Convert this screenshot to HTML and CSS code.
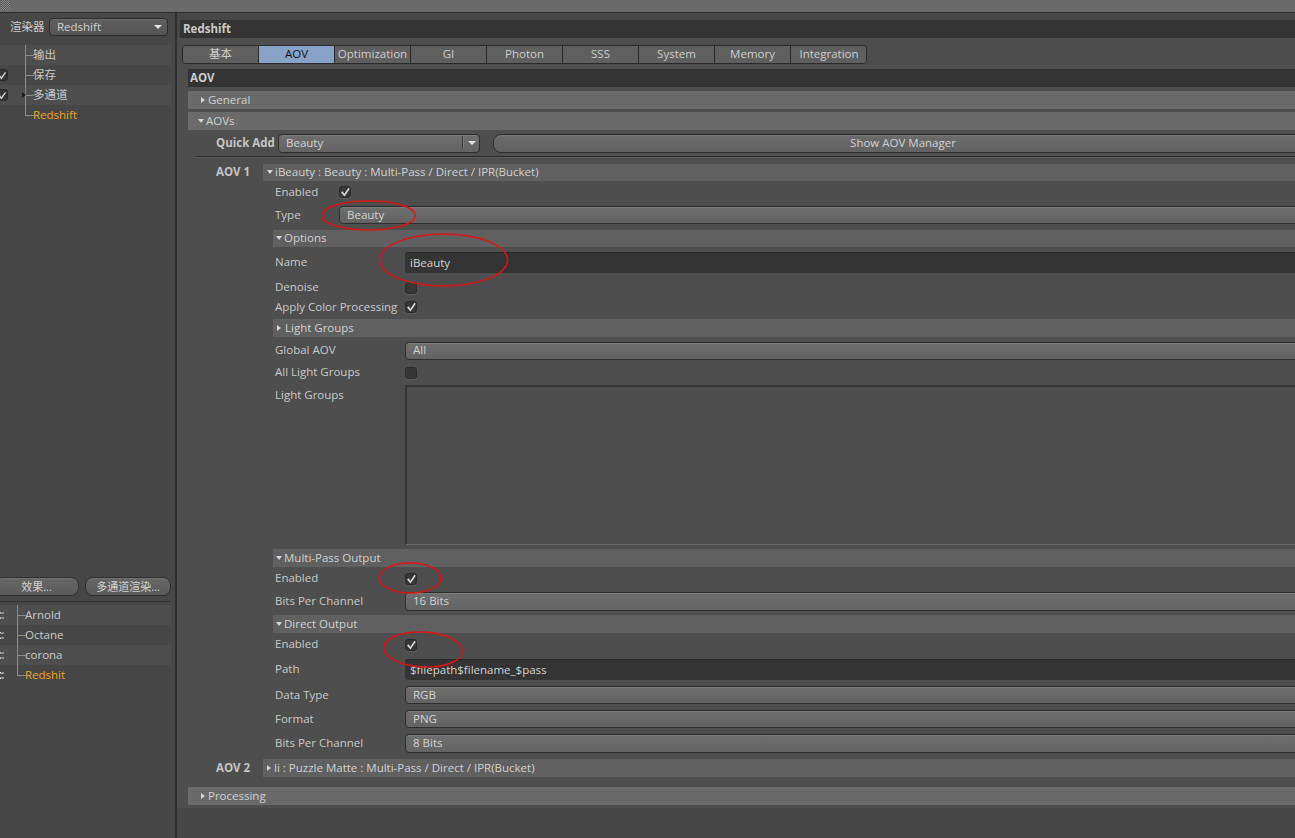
FILE: index.html
```html
<!DOCTYPE html>
<html lang="zh-CN">
<head>
<meta charset="utf-8">
<title>Redshift AOV</title>
<link rel="stylesheet" href="styles.css">
</head>
<body>
<div class="topbar"><div class="grip"></div></div>
<div class="main">
  <aside class="left">
    <div class="renderer">
      <span class="renderer-label">渲染器</span>
      <div class="combo combo-renderer"><span>Redshift</span><i class="arrow-w"></i></div>
    </div>
    <ul class="tree tree-top">
      <li class="alt">输出</li>
      <li><span class="lchk"><svg width="9" height="11" viewBox="0 0 9 11"><path d="M0.5 6 L2 5 L3.2 7.3 L7 2 L8 2.8 L3.5 9.5 Z" fill="#d6d6d6"/></svg></span>保存</li>
      <li class="alt"><span class="lchk"><svg width="9" height="11" viewBox="0 0 9 11"><path d="M0.5 6 L2 5 L3.2 7.3 L7 2 L8 2.8 L3.5 9.5 Z" fill="#d6d6d6"/></svg></span><span class="exp"></span>多通道</li>
      <li class="active last">Redshift</li>
    </ul>
    <div class="left-buttons">
      <button class="pill pill-a">效果...</button>
      <button class="pill pill-b">多通道渲染...</button>
    </div>
    <div class="left-sep"></div>
    <ul class="tree tree-bottom">
      <li class="alt"><span class="vico"><svg width="8" height="9" viewBox="0 0 8 9"><path d="M0 1.5 H3 V3 M0 7.5 H3 V6 M5 1 V3 M5 6 V8" fill="none" stroke="#d0d0d0" stroke-width="1"/></svg></span>Arnold</li>
      <li><span class="vico"><svg width="8" height="9" viewBox="0 0 8 9"><path d="M0 1.5 H3 V3 M0 7.5 H3 V6 M5 1 V3 M5 6 V8" fill="none" stroke="#d0d0d0" stroke-width="1"/></svg></span>Octane</li>
      <li class="alt"><span class="vico"><svg width="8" height="9" viewBox="0 0 8 9"><path d="M0 1.5 H3 V3 M0 7.5 H3 V6 M5 1 V3 M5 6 V8" fill="none" stroke="#d0d0d0" stroke-width="1"/></svg></span>corona</li>
      <li class="active last"><span class="vico"><svg width="8" height="9" viewBox="0 0 8 9"><path d="M0 1.5 H3 V3 M0 7.5 H3 V6 M5 1 V3 M5 6 V8" fill="none" stroke="#f0f0f0" stroke-width="1"/></svg></span>Redshit</li>
    </ul>
  </aside>

  <section class="right">
    <div class="rs-head">Redshift</div>
    <div class="rs-body">
      <nav class="tabs">
        <span class="tab">基本</span>
        <span class="tab sel">AOV</span>
        <span class="tab">Optimization</span>
        <span class="tab">GI</span>
        <span class="tab">Photon</span>
        <span class="tab">SSS</span>
        <span class="tab">System</span>
        <span class="tab">Memory</span>
        <span class="tab">Integration</span>
      </nav>

      <div class="group">
        <div class="group-title">AOV</div>
        <div class="sec"><i class="tri-r"></i>General</div>
        <div class="sec sec-aovs"><i class="tri-d"></i>AOVs</div>
        <div class="aovs-body">
          <div class="quick">
            <span class="quick-label">Quick Add</span>
            <div class="combo combo-quick"><span>Beauty</span><i class="combo-sep"></i><i class="arrow-w"></i></div>
            <button class="manager">Show AOV Manager</button>
          </div>
          <div class="hsep"></div>

          <div class="aov aov-1">
            <div class="aov-label">AOV 1</div>
            <div class="aov-content">
              <div class="aov-head"><i class="tri-d"></i>iBeauty : Beauty : Multi-Pass / Direct / IPR(Bucket)</div>
              <div class="row r-short h22"><span class="lbl">Enabled</span><span class="chk"><svg width="12" height="12" viewBox="0 0 12 12"><path d="M2 6.5 L3.8 5.3 L5.2 8 L9.5 1.8 L10.8 2.8 L5.5 10.5 Z" fill="#d8d8d8"/></svg></span></div>
              <div class="row r-short h24"><span class="lbl">Type</span><div class="combo combo-wide"><span>Beauty</span></div></div>

              <div class="sub sub-opt"><i class="tri-d"></i>Options</div>
              <div class="row h31"><span class="lbl">Name</span><div class="field">iBeauty</div></div>
              <div class="row h19"><span class="lbl">Denoise</span><span class="chk"></span></div>
              <div class="row h20"><span class="lbl">Apply Color Processing</span><span class="chk"><svg width="12" height="12" viewBox="0 0 12 12"><path d="M2 6.5 L3.8 5.3 L5.2 8 L9.5 1.8 L10.8 2.8 L5.5 10.5 Z" fill="#d8d8d8"/></svg></span></div>

              <div class="sub mt2"><i class="tri-r"></i>Light Groups</div>
              <div class="row h27"><span class="lbl">Global AOV</span><div class="combo combo-wide"><span>All</span></div></div>
              <div class="row h17"><span class="lbl">All Light Groups</span><span class="chk"></span></div>
              <div class="row row-list"><span class="lbl">Light Groups</span><div class="listbox"></div></div>

              <div class="sub"><i class="tri-d"></i>Multi-Pass Output</div>
              <div class="row h23"><span class="lbl">Enabled</span><span class="chk"><svg width="12" height="12" viewBox="0 0 12 12"><path d="M2 6.5 L3.8 5.3 L5.2 8 L9.5 1.8 L10.8 2.8 L5.5 10.5 Z" fill="#d8d8d8"/></svg></span></div>
              <div class="row h23"><span class="lbl">Bits Per Channel</span><div class="combo combo-wide c19"><span>16 Bits</span></div></div>

              <div class="sub mt2"><i class="tri-d"></i>Direct Output</div>
              <div class="row h23"><span class="lbl">Enabled</span><span class="chk"><svg width="12" height="12" viewBox="0 0 12 12"><path d="M2 6.5 L3.8 5.3 L5.2 8 L9.5 1.8 L10.8 2.8 L5.5 10.5 Z" fill="#d8d8d8"/></svg></span></div>
              <div class="row h27"><span class="lbl">Path</span><div class="field">$filepath$filename_$pass</div></div>
              <div class="row h24"><span class="lbl">Data Type</span><div class="combo combo-wide"><span>RGB</span></div></div>
              <div class="row h24"><span class="lbl">Format</span><div class="combo combo-wide"><span>PNG</span></div></div>
              <div class="row h24"><span class="lbl">Bits Per Channel</span><div class="combo combo-wide c19"><span>8 Bits</span></div></div>
            </div>
          </div>

          <div class="aov aov-2">
            <div class="aov-label">AOV 2</div>
            <div class="aov-content">
              <div class="aov-head aov-head-2"><i class="tri-r"></i>li : Puzzle Matte : Multi-Pass / Direct / IPR(Bucket)</div>
            </div>
          </div>
        </div>
        <div class="sec sec-proc"><i class="tri-r"></i>Processing</div>
      </div>
    </div>
  </section>
</div>

<svg class="marks" width="1295" height="838" viewBox="0 0 1295 838">
  <ellipse cx="368.5" cy="215.5" rx="47" ry="14.5"/>
  <ellipse cx="443.5" cy="260" rx="64" ry="26"/>
  <ellipse cx="410" cy="578" rx="31" ry="15"/>
  <ellipse cx="423" cy="649.5" rx="39.5" ry="17.5" transform="rotate(3 423 649.5)"/>
</svg>
</body>
</html>
```
FILE: styles.css
```css
* { box-sizing: border-box; }
html, body { margin: 0; padding: 0; }
body {
  width: 1295px;
  height: 838px;
  overflow: hidden;
  position: relative;
  background: #474747;
  color: #c9c9c9;
  font-family: "Open Sans", "Noto Sans CJK SC", sans-serif;
  font-size: 11.5px;
  line-height: 1;
}
ul { list-style: none; margin: 0; padding: 0; }
button { font: inherit; color: inherit; }

/* top strip */
.topbar {
  height: 13px;
  background: #6a6a6a;
  border-bottom: 1px solid #2c2c2c;
}
.grip {
  width: 9px;
  height: 10px;
  margin-left: 1px;
  background: repeating-conic-gradient(#8a8a8a 0 25%, #555 0 50%) 0 0 / 2px 2px;
}

.main {
  display: flex;
  height: 825px;
}

/* ---------- left panel ---------- */
.left {
  width: 177px;
  flex: none;
  border-right: 2px solid #303030;
  background: #474747;
  display: flex;
  flex-direction: column;
  overflow: hidden;
}
.renderer {
  display: flex;
  align-items: center;
  height: 18px;
  margin-top: 5px;
  padding-left: 10px;
}
.renderer-label {
  width: 39px;
  color: #cfcfcf;
  margin-bottom: 1px;
}
.combo {
  display: flex;
  align-items: center;
  height: 18px;
  border: 1px solid #2e2e2e;
  border-radius: 4px;
  background: linear-gradient(#6f6f6f, #636363);
  box-shadow: inset 0 1px 0 #7a7a7a;
  color: #d2d2d2;
  padding-left: 7px;
  padding-bottom: 1px;
}
.combo span { flex: 1; white-space: nowrap; }
.combo-renderer {
  width: 119px;
  background: linear-gradient(#5f5f5f, #555);
  box-shadow: inset 0 1px 0 #6a6a6a;
}
.arrow-w {
  width: 0; height: 0;
  border-left: 4px solid transparent;
  border-right: 4px solid transparent;
  border-top: 4px solid #e4e4e4;
  margin-right: 5px;
}
.tree li {
  position: relative;
  height: 20px;
  display: flex;
  align-items: center;
  padding-bottom: 1px;
  margin-right: 4px;
  white-space: nowrap;
  color: #c9c9c9;
}
.tree li.alt { background: #4e4e4e; }
.tree li.active { color: #f3a51d; }
.tree li::before {
  content: "";
  position: absolute;
  top: 0;
  height: 10px;
  width: 8px;
  border-left: 1px solid #8a8a8a;
  border-bottom: 1px solid #8a8a8a;
}
.tree li::after {
  content: "";
  position: absolute;
  top: 10px;
  height: 10px;
  border-left: 1px solid #8a8a8a;
}
.tree li.last::after { display: none; }
.tree-top { margin-top: 9px; }
.tree-top li { padding-left: 33px; }
.tree-top li::before, .tree-top li::after { left: 25px; }
.tree-bottom { margin-top: 3px; }
.tree-bottom li { padding-left: 25px; }
.tree-bottom li::before, .tree-bottom li::after { left: 17px; }
.lchk {
  position: absolute;
  left: -5px;
  top: 4px;
  width: 13px;
  height: 12px;
  border-radius: 3px;
  background: #353535;
  border: 1px solid #2a2a2a;
  display: flex;
  align-items: center;
  justify-content: flex-end;
}
.exp {
  position: absolute;
  left: 22px;
  top: 7px;
  width: 0; height: 0;
  border-top: 3px solid transparent;
  border-bottom: 3px solid transparent;
  border-left: 4px solid #1e1e1e;
  z-index: 1;
}
.vico {
  position: absolute;
  left: -2px;
  top: 6px;
  display: flex;
}
.left-buttons {
  display: flex;
  gap: 6px;
  margin-top: 452px;
  margin-left: -6px;
}
.pill {
  height: 19px;
  border: 1px solid #2e2e2e;
  border-radius: 8px;
  background: linear-gradient(#666, #5b5b5b);
  box-shadow: inset 0 1px 0 #727272;
  color: #d0d0d0;
  font-size: 11px;
  padding: 0 0 1px;
  display: flex;
  align-items: center;
  justify-content: center;
}
.pill-a { width: 85px; }
.pill-b { width: 86px; }
.left-sep {
  margin-top: 5px;
  height: 1px;
  background: #333;
  margin-right: 4px;
}

/* ---------- right panel ---------- */
.right {
  flex: 1;
  padding-top: 7px;
  overflow: hidden;
  background: #474747;
}
.rs-head {
  margin-left: 3px;
  height: 18px;
  background: #333;
  font-weight: 700;
  color: #cbcbcb;
  padding: 0 0 1px 3px;
  display: flex;
  align-items: center;
}
.rs-body {
  background: #4e4e4e;
  padding: 7px 0 3px 5px;
}
.tabs {
  display: flex;
  width: 685px;
  height: 19px;
  border: 1px solid #2b2b2b;
  border-radius: 4px;
  overflow: hidden;
}
.tab {
  width: 76px;
  flex: none;
  display: flex;
  align-items: center;
  justify-content: center;
  padding-bottom: 1px;
  background: #5f5f5f;
  border-right: 1px solid #2b2b2b;
  color: #cdcdcd;
}
.tab:last-child { border-right: none; }
.tab.sel { background: #88a3c8; color: #111; }

.group { margin-left: 6px; margin-top: 5px; }
.group-title {
  height: 18px;
  background: #333;
  font-weight: 700;
  color: #cbcbcb;
  padding: 0 0 1px 2px;
  display: flex;
  align-items: center;
}
.sec {
  height: 18px;
  margin-top: 4px;
  background: #6a6a6a;
  display: flex;
  align-items: center;
  padding: 0 0 1px 13px;
  color: #d0d0d0;
}
.sec-aovs { margin-top: 3px; padding-left: 10px; }
.sec-proc { margin-top: 10px; }
.tri-r {
  width: 0; height: 0;
  border-top: 3.5px solid transparent;
  border-bottom: 3.5px solid transparent;
  border-left: 4px solid #d6d6d6;
  margin-right: 3px;
}
.tri-d {
  width: 0; height: 0;
  border-left: 3.5px solid transparent;
  border-right: 3.5px solid transparent;
  border-top: 4px solid #d6d6d6;
  margin-right: 2px;
}

.aovs-body { padding-left: 28px; }
.quick {
  display: flex;
  align-items: center;
  height: 20px;
  margin-top: 3px;
}
.quick-label {
  width: 62px;
  font-weight: 700;
  color: #c4c4c4;
  margin-bottom: 1px;
}
.combo-quick { width: 202px; height: 19px; }
.combo-sep {
  width: 2px;
  height: 13px;
  background: #3a3a3a;
  border-right: 1px solid #7a7a7a;
  margin-right: 4px;
}
.combo-quick .arrow-w { margin-right: 3px; }
.manager {
  flex: 1;
  margin-left: 13px;
  margin-right: -12px;
  height: 19px;
  border: 1px solid #2e2e2e;
  border-radius: 8px;
  background: linear-gradient(#6c6c6c, #626262);
  box-shadow: inset 0 1px 0 #777;
  color: #d0d0d0;
  padding: 0 0 1px 6px;
  text-align: center;
}
.hsep {
  margin-top: 3px;
  margin-left: -20px;
  height: 1px;
  background: #2f2f2f;
  border-bottom: 1px solid #5a5a5a;
  box-sizing: content-box;
}

.aov { display: flex; }
.aov-1 { margin-top: 6px; }
.aov-2 { margin-top: 4px; }
.aov-label {
  width: 47px;
  flex: none;
  height: 17px;
  display: flex;
  align-items: center;
  padding-bottom: 1px;
  font-weight: 700;
  color: #c4c4c4;
}
.aov-2 .aov-label { height: 18px; }
.aov-content { flex: 1; min-width: 0; }
.aov-head {
  height: 17px;
  background: #606060;
  display: flex;
  align-items: center;
  padding: 0 0 1px 4px;
  color: #d0d0d0;
  white-space: nowrap;
}
.aov-head-2 { height: 18px; }

.row {
  display: flex;
  align-items: center;
  padding-left: 12px;
}
.lbl {
  width: 130px;
  flex: none;
  color: #c9c9c9;
  white-space: nowrap;
  margin-bottom: 1px;
}
.r-short .lbl { width: 64px; }
.h17 { height: 17px; }
.h19 { height: 19px; }
.h20 { height: 20px; }
.h22 { height: 22px; }
.h23 { height: 23px; }
.h24 { height: 24px; }
.h27 { height: 27px; }
.h31 { height: 31px; }

.chk {
  width: 12px;
  height: 12px;
  border-radius: 3px;
  background: #373737;
  border: 1px solid #2c2c2c;
  box-shadow: 0 1px 0 #5c5c5c;
  display: flex;
  align-items: center;
  justify-content: center;
}
.chk svg { flex: none; }
.combo-wide {
  flex: 1;
  margin-right: -12px;
  height: 18px;
}
.combo.c19 { height: 19px; }
.field {
  flex: 1;
  margin-right: -12px;
  height: 21px;
  background: #343434;
  border-top: 1px solid #292929;
  border-radius: 3px;
  padding: 0 0 1px 5px;
  display: flex;
  align-items: center;
  color: #d2d2d2;
}
.sub {
  margin-left: 10px;
  height: 18px;
  background: #606060;
  display: flex;
  align-items: center;
  padding: 0 0 1px 3px;
  color: #d0d0d0;
}
.sub.sub-opt { margin-top: 3px; height: 17px; }
.sub.mt2 { margin-top: 2px; }
.sub .tri-r { margin-left: 1px; margin-right: 4px; }
.row-list {
  align-items: flex-start;
  height: 168px;
  padding-top: 4px;
}
.row-list .lbl { padding-top: 4px; }
.listbox {
  flex: 1;
  height: 160px;
  margin-right: -12px;
  background: #4e4e4e;
  border-top: 2px solid #363636;
  border-left: 2px solid #363636;
  border-bottom: 1px solid #6a6a6a;
}

/* annotation overlay */
.marks {
  position: absolute;
  left: 0;
  top: 0;
  pointer-events: none;
}
.marks ellipse {
  fill: none;
  stroke: #e01414;
  stroke-width: 1.5;
}
```
